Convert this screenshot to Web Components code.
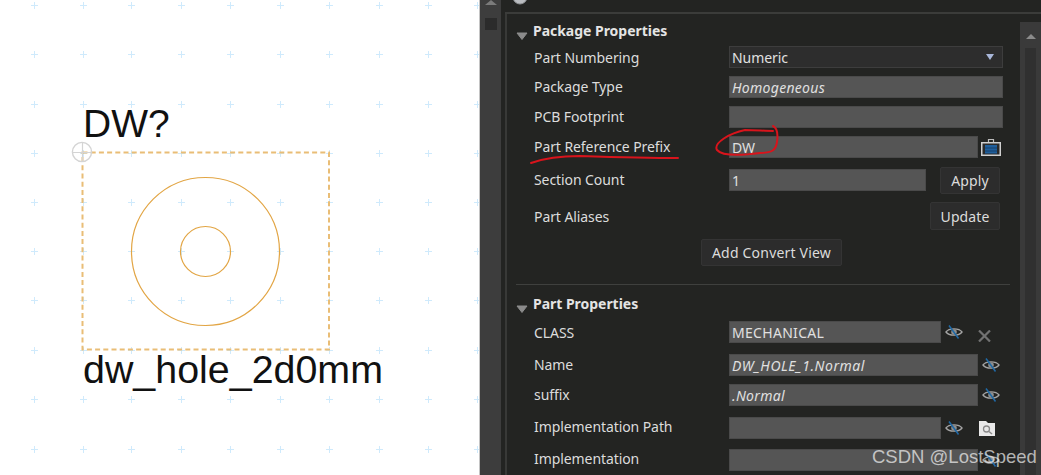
<!DOCTYPE html>
<html>
<head>
<meta charset="utf-8">
<style>
  html, body { margin: 0; padding: 0; background: #fff; overflow: hidden; }
  body { width: 1041px; height: 475px; position: relative; display: flex; }
  #marks { position: absolute; left: 0; top: 0; pointer-events: none; }
</style>
</head>
<body>

<sch-canvas>
  <span slot="ref">DW?</span>
  <span slot="value">dw_hole_2d0mm</span>
</sch-canvas>

<prop-panel>
  <prop-section title="Package Properties" style="margin-top:5px">
    <prop-row label="Part Numbering" style="margin-top:5px;--lift:0px"><prop-field kind="combo">Numeric</prop-field></prop-row>
    <prop-row label="Package Type" style="margin-top:8px"><prop-field italic>Homogeneous</prop-field></prop-row>
    <prop-row label="PCB Footprint" style="margin-top:8px"><prop-field></prop-field></prop-row>
    <prop-row label="Part Reference Prefix" style="margin-top:8px">
      <prop-field>DW</prop-field>
      <prop-after slot="after" width="25" pad="3"><prop-icon name="case"></prop-icon></prop-after>
    </prop-row>
    <prop-row label="Section Count" style="margin-top:11px">
      <prop-field>1</prop-field>
      <prop-after slot="after" width="77" pad="14"><prop-btn w="60">Apply</prop-btn></prop-after>
    </prop-row>
    <prop-row label="Part Aliases" style="margin-top:11px;height:28px;--lift:0px">
      <prop-spacer></prop-spacer>
      <prop-after slot="after" width="73" pad="0"><prop-btn w="70" h="28">Update</prop-btn></prop-after>
    </prop-row>
    <prop-center style="margin-top:9px"><prop-btn w="141" style="letter-spacing:.2px">Add Convert View</prop-btn></prop-center>
  </prop-section>

  <prop-section title="Part Properties" divider style="margin-top:18px">
    <prop-row label="CLASS" style="margin-top:7px;--lift:0px">
      <prop-field style="letter-spacing:.3px">MECHANICAL</prop-field>
      <prop-after slot="after" width="62" pad="4"><prop-icon name="eye"></prop-icon><prop-icon name="x"></prop-icon></prop-after>
    </prop-row>
    <prop-row label="Name" style="margin-top:11px">
      <prop-field italic style="letter-spacing:.55px">DW_HOLE_1.Normal</prop-field>
      <prop-after slot="after" width="25" pad="4"><prop-icon name="eye"></prop-icon></prop-after>
    </prop-row>
    <prop-row label="suffix" style="margin-top:8px">
      <prop-field italic>.Normal</prop-field>
      <prop-after slot="after" width="25" pad="4"><prop-icon name="eye"></prop-icon></prop-after>
    </prop-row>
    <prop-row label="Implementation Path" style="margin-top:11px;--lift:-4px">
      <prop-field></prop-field>
      <prop-after slot="after" width="62" pad="4"><prop-icon name="eye"></prop-icon><prop-icon name="folder"></prop-icon></prop-after>
    </prop-row>
    <prop-row label="Implementation" style="margin-top:10px;--lift:-4px">
      <prop-field></prop-field>
      <prop-after slot="after" width="25" pad="4"><prop-icon name="eye"></prop-icon></prop-after>
    </prop-row>
  </prop-section>
</prop-panel>

<!-- red pen marks over the screenshot -->
<svg id="marks" width="1041" height="475" viewBox="0 0 1041 475" fill="none" stroke="#d8141c" stroke-width="2" stroke-linecap="round">
  <path d="M531 163C545 158 562 156 580 156C612 157 645 158 678 158"/>
  <path d="M773 126C777 128 778 135 777 142C776 150 772 153 760 153C745 155 723 157 717 150C713 143 730 133 745 130C755 130 765 131 773 131"/>
</svg>

<water-mark>CSDN @LostSpeed</water-mark>

<script>
const UI_FONT = '"Noto Sans", "Open Sans", sans-serif';

class SchCanvas extends HTMLElement {
  connectedCallback() {
    let shadow = this.attachShadow({mode: 'open'});
    let xs = [34, 83, 131, 181, 230, 280, 329, 379, 428, 477];
    let ys = [5, 54, 104, 153, 202, 251, 300, 350, 399, 449];
    let grid = '';
    for (let y of ys) {
      for (let x of xs) {
        grid += `M${x - 3} ${y + .5}h7M${x + .5} ${y - 3}v7`;
      }
    }
    shadow.innerHTML = `
      <style>
        :host { display: block; position: relative; width: 479px; height: 475px; flex: none;
                background: #fff; border-right: 1px solid #c4c4c4; overflow: hidden; }
        svg { position: absolute; left: 0; top: 0; }
        .txt { position: absolute; left: 83px; line-height: 1; font-family: "Liberation Sans", Arial, sans-serif; color: #111; white-space: nowrap; }
        .ref { top: 104px; font-size: 39px; }
        .value { top: 350px; font-size: 39.4px; }
      </style>
      <svg width="479" height="475" fill="none">
        <path d="${grid}" stroke="#cfeafc" stroke-width="1"/>
        <rect x="82.5" y="152.5" width="246.5" height="197" stroke="#e9bd76" stroke-width="2" stroke-dasharray="5 3.2"/>
        <circle cx="205.5" cy="251.5" r="74" stroke="#e2a544" stroke-width="1.2"/>
        <circle cx="205.5" cy="251.5" r="25" stroke="#e2a544" stroke-width="1.2"/>
        <circle cx="82" cy="152" r="9.6" stroke="#d4d4d4" stroke-width="1.4"/>
        <path d="M72 152.5h20M82.5 142v20" stroke="#d4d4d4" stroke-width="1.2"/>
      </svg>
      <div class="txt ref"><slot name="ref"></slot></div>
      <div class="txt value"><slot name="value"></slot></div>`;
  }
}

class PropPanel extends HTMLElement {
  connectedCallback() {
    let shadow = this.attachShadow({mode: 'open'});
    shadow.innerHTML = `
      <style>
        :host { display: flex; flex: 1; height: 475px; background: #232422; overflow: hidden; font-family: ${UI_FONT}; }
        .rail { width: 21px; flex: none; background: #3d3d3d; display: flex; flex-direction: column; align-items: center; }
        .rail i { display: block; border: 6px solid transparent; border-top: 0; border-bottom: 5px solid #7b7b7b; margin-top: 0; }
        .rail b { display: block; width: 12px; height: 12px; background: #2b2b2b; margin-top: 13px; }
        .gap { width: 4px; flex: none; }
        .main { flex: 1; min-width: 0; display: flex; flex-direction: column; position: relative; }
        .top { height: 12px; flex: none; border-bottom: 2px solid #3b3c3a; position: relative; }
        .top svg { position: absolute; left: 5px; top: 0; }
        .mid { flex: 1; display: flex; min-height: 0; }
        .body { flex: 1; min-width: 0; border-left: 2px solid #383937; padding-left: 9px; }
        .scroll { width: 21px; flex: none; margin-top: 8px; background: #3a3a3a; display: flex; flex-direction: column; align-items: center; margin-left: 0; }
        .scroll i { display: block; border: 5px solid transparent; border-top: 0; border-bottom: 5px solid #8b8b8b; margin-top: 12px; }
        .scroll b { display: block; flex: 1; width: 11px; background: #303030; margin-top: 9px; }
      </style>
      <div class="rail"><i></i><b></b></div>
      <div class="gap"></div>
      <div class="main">
        <div class="top"><svg width="20" height="8" fill="none"><circle cx="10" cy="-3" r="7" fill="#b9bcc0" stroke="#8f9296"/><circle cx="10" cy="-3" r="3" fill="#6e7176"/></svg></div>
        <div class="mid">
          <div class="body"><slot></slot></div>
          <div class="scroll"><i></i><b></b></div>
        </div>
      </div>`;
  }
}

class PropSection extends HTMLElement {
  connectedCallback() {
    let shadow = this.attachShadow({mode: 'open'});
    let title = this.getAttribute('title');
    this.removeAttribute('title');
    shadow.innerHTML = `
      <style>
        :host { display: block; width: 494px; }
        :host([divider]) { border-top: 1px solid #3f403e; padding-top: 7px; }
        .head { display: flex; align-items: center; height: 22px; color: #e4e4e4; font-size: 14px; font-weight: 700; letter-spacing: -.03px; }
        .tri { width: 12px; height: 8px; margin: 12px 5px 0 0; flex: none; }
      </style>
      <div class="head">
        <svg class="tri" viewBox="0 0 12 8"><path d="M1 1h10L6 7.500z" fill="#8b8b8b" stroke="#8b8b8b" stroke-linejoin="round"/></svg>
        <span>${title}</span>
      </div>
      <slot></slot>`;
  }
}

class PropRow extends HTMLElement {
  connectedCallback() {
    let shadow = this.attachShadow({mode: 'open'});
    shadow.innerHTML = `
      <style>
        :host { display: flex; align-items: center; height: 22px; padding-left: 18px; width: 469px; }
        .label { width: 195px; flex: none; margin-top: var(--lift, -2px); color: #dcdcdc; font-size: 14px; letter-spacing: -.08px; white-space: nowrap; }
      </style>
      <div class="label">${this.getAttribute('label')}</div>
      <slot></slot>
      <slot name="after"></slot>`;
  }
}

class PropField extends HTMLElement {
  connectedCallback() {
    let shadow = this.attachShadow({mode: 'open'});
    let combo = this.getAttribute('kind') == 'combo';
    shadow.innerHTML = `
      <style>
        :host { display: flex; flex: 1; min-width: 0; height: 22px; box-sizing: border-box; align-items: center;
                padding-left: 2px; background: #555; border: 1px solid #4a4a4a; color: #e0e0e0;
                font-size: 14px; letter-spacing: -.05px; white-space: nowrap; }
        :host([italic]) { font-style: italic; letter-spacing: .3px; }
        :host([kind="combo"]) { background: #2d2d2d; border-color: #3d3d3d; padding-right: 8px; justify-content: space-between; }
        i { border: 4.5px solid transparent; border-bottom: 0; border-top: 6px solid #a9b7d9; }
      </style>
      <span><slot></slot></span>${combo ? '<i></i>' : ''}`;
  }
}

class PropSpacer extends HTMLElement {
  connectedCallback() {
    this.attachShadow({mode: 'open'}).innerHTML = `<style>:host { display: block; flex: 1; }</style>`;
  }
}

class PropAfter extends HTMLElement {
  connectedCallback() {
    let shadow = this.attachShadow({mode: 'open'});
    let w = this.getAttribute('width');
    let pad = this.getAttribute('pad');
    shadow.innerHTML = `
      <style>
        :host { display: flex; align-items: center; flex: none; box-sizing: border-box; width: ${w}px; padding-left: ${pad}px; }
      </style>
      <slot></slot>`;
  }
}

class PropCenter extends HTMLElement {
  connectedCallback() {
    this.attachShadow({mode: 'open'}).innerHTML = `
      <style>:host { display: flex; padding-left: 185px; }</style><slot></slot>`;
  }
}

class PropBtn extends HTMLElement {
  connectedCallback() {
    let shadow = this.attachShadow({mode: 'open'});
    let w = this.getAttribute('w');
    let h = this.getAttribute('h') || 27;
    shadow.innerHTML = `
      <style>
        :host { display: flex; flex: none; align-items: center; justify-content: center; box-sizing: border-box;
                width: ${w}px; height: ${h}px; background: #2c2c2c; border: 1px solid #343434; border-radius: 2px;
                color: #dcdcdc; font-size: 14px; letter-spacing: .1px; white-space: nowrap; }
      </style>
      <slot></slot>`;
  }
}

const ICONS = {
  eye: `<svg width="18" height="16" viewBox="0 0 18 16" fill="none">
      <path d="M1 8C4 3.8 14 3.8 17 8C14 12.2 4 12.2 1 8Z" stroke="#a4a4a4" stroke-width="1.4"/>
      <circle cx="9" cy="8" r="2.8" fill="#8e8e8e"/>
      <path d="M4 1.5L13.500 14.500" stroke="#1f6aa8" stroke-width="1.5"/></svg>`,
  x: `<svg width="13" height="12" viewBox="0 0 13 12" style="position:relative;top:4px;margin-left:15px" fill="none">
      <path d="M1 .5L12 11.500M12 .5L1 11.500" stroke="#727272" stroke-width="2.200"/></svg>`,
  folder: `<svg width="16" height="15" viewBox="0 0 16 15" style="margin-left:16px" fill="none">
      <path d="M0 0h7l2 2h7v13H0z" fill="#e9e9e9"/>
      <circle cx="7.500" cy="8" r="3" stroke="#8a8a8a" stroke-width="1.300"/>
      <path d="M10 10.500l3 2.500" stroke="#8a8a8a" stroke-width="1.500"/></svg>`,
  case: `<svg width="20" height="18" viewBox="0 0 20 18" fill="none">
      <path d="M7.500 4V1.500h5V4" stroke="#bdbdbd" stroke-width="1.200"/>
      <rect x=".75" y="4.750" width="18.500" height="12.500" fill="#2a2a2a" stroke="#d0d0d0" stroke-width="1.500"/>
      <rect x="4" y="7" width="12" height="8.500" fill="#1f5f9c"/>
      <path d="M4 10h12M4 13h12" stroke="#17406a"/></svg>`
};

class PropIcon extends HTMLElement {
  connectedCallback() {
    this.attachShadow({mode: 'open'}).innerHTML = `
      <style>:host { display: flex; flex: none; }</style>${ICONS[this.getAttribute('name')]}`;
  }
}

class WaterMark extends HTMLElement {
  connectedCallback() {
    this.attachShadow({mode: 'open'}).innerHTML = `
      <style>
        :host { position: absolute; left: 872px; top: 446px; font: 18.5px/22px "Liberation Sans", Arial, sans-serif;
                color: rgba(255,255,255,.66); white-space: nowrap; }
      </style><slot></slot>`;
  }
}

customElements.define('sch-canvas', SchCanvas);
customElements.define('prop-panel', PropPanel);
customElements.define('prop-section', PropSection);
customElements.define('prop-row', PropRow);
customElements.define('prop-field', PropField);
customElements.define('prop-spacer', PropSpacer);
customElements.define('prop-after', PropAfter);
customElements.define('prop-center', PropCenter);
customElements.define('prop-btn', PropBtn);
customElements.define('prop-icon', PropIcon);
customElements.define('water-mark', WaterMark);
</script>
</body>
</html>
